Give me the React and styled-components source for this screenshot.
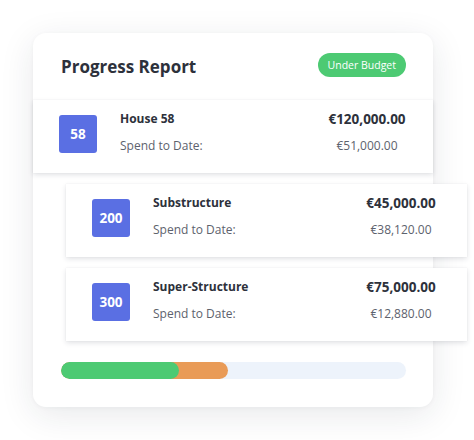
import React from 'react';
import styled, { createGlobalStyle } from 'styled-components';

const GlobalStyle = createGlobalStyle`
    html, body {
        margin: 0;
        padding: 0;
        background: #ffffff;
    }
    body {
        font-family: "Open Sans", "Noto Sans", sans-serif;
        color: #2d313b;
    }
`;

const items = [
    { code: '200', name: 'Substructure', budget: '€45,000.00', spent: '€38,120.00' },
    { code: '300', name: 'Super-Structure', budget: '€75,000.00', spent: '€12,880.00' }
];

const progress = { spent: 34.2, committed: 48.4 };

const Row = ({ code, name, budget, spent, nested }) => (
    <Panel nested={nested}>
        <CodeBox>{code}</CodeBox>
        <Details>
            <Name>{name}</Name>
            <Label>Spend to Date:</Label>
        </Details>
        <Amounts>
            <Budget>{budget}</Budget>
            <Spent>{spent}</Spent>
        </Amounts>
    </Panel>
);

const App = () => (
    <Page>
        <GlobalStyle />
        <Card>
            <Header>
                <Title>Progress Report</Title>
                <Badge>Under Budget</Badge>
            </Header>
            <Row code="58" name="House 58" budget="€120,000.00" spent="€51,000.00" />
            <SubList>
                {items.map((item) => (
                    <Row key={item.code} {...item} nested />
                ))}
            </SubList>
            <Track>
                <Segment color="#e99b57" style={{ width: `${progress.committed}%` }} />
                <Segment color="#4dca73" style={{ width: `${progress.spent}%` }} />
            </Track>
        </Card>
    </Page>
);

const Page = styled.div`
    padding: 33px 0 0 33px;
    width: 474px;
    height: 440px;
    box-sizing: border-box;
    overflow: hidden;
`;

const Card = styled.div`
    width: 400px;
    height: 374px;
    box-sizing: border-box;
    background: #ffffff;
    border-radius: 13px;
    box-shadow: 0 8px 34px rgba(30, 40, 60, 0.1), 0 1px 4px rgba(30, 40, 60, 0.04);
    display: flex;
    flex-direction: column;
`;

const Header = styled.div`
    height: 67px;
    box-sizing: border-box;
    padding: 20px 27px 0 28px;
    display: flex;
    justify-content: space-between;
    align-items: flex-start;
`;

const Title = styled.h2`
    margin: 0;
    padding-top: 2px;
    font-size: 17px;
    line-height: 24px;
    font-weight: 700;
    color: #2d313b;
`;

const Badge = styled.span`
    height: 24px;
    line-height: 24px;
    padding: 0 10px;
    border-radius: 12px;
    background: #4dca73;
    color: #ffffff;
    font-size: 10.5px;
`;

const Panel = styled.div`
    width: ${({ nested }) => (nested ? '401px' : '400px')};
    height: 73px;
    margin-left: ${({ nested }) => (nested ? '33px' : '0')};
    box-sizing: border-box;
    padding: 0 0 0 26px;
    background: #ffffff;
    box-shadow: 0 2px 5px rgba(30, 40, 60, 0.13), 0 0 1px rgba(30, 40, 60, 0.08);
    display: flex;
    align-items: flex-start;
    position: relative;
`;

const CodeBox = styled.div`
    margin-top: 15px;
    width: 38px;
    height: 38px;
    border-radius: 3px;
    background: #5a6fe3;
    color: #ffffff;
    font-size: 13.5px;
    font-weight: 700;
    display: flex;
    align-items: center;
    justify-content: center;
`;

const Details = styled.div`
    flex: 1;
    margin-left: 23px;
    padding-top: 9px;
    display: flex;
    flex-direction: column;
    gap: 7px;
`;

const Name = styled.div`
    font-size: 12px;
    line-height: 20px;
    font-weight: 700;
    color: #2d313b;
`;

const Label = styled.div`
    font-size: 12px;
    line-height: 20px;
    color: #5d626d;
`;

const Amounts = styled.div`
    width: 100px;
    margin-right: 16px;
    padding-top: 9px;
    display: flex;
    flex-direction: column;
    gap: 7px;
    text-align: center;
`;

const Budget = styled.div`
    font-size: 13.5px;
    line-height: 20px;
    font-weight: 700;
    color: #2d313b;
`;

const Spent = styled.div`
    font-size: 12px;
    line-height: 20px;
    color: #5d626d;
`;

const SubList = styled.div`
    margin-top: 11px;
    display: flex;
    flex-direction: column;
    gap: 11px;
`;

const Track = styled.div`
    margin: 21px 27px 0 28px;
    height: 17px;
    border-radius: 9px;
    background: #edf3fb;
    position: relative;
    overflow: hidden;
`;

const Segment = styled.div`
    position: absolute;
    left: 0;
    top: 0;
    bottom: 0;
    border-radius: 9px;
    background: ${({ color }) => color};
`;

export default App;
